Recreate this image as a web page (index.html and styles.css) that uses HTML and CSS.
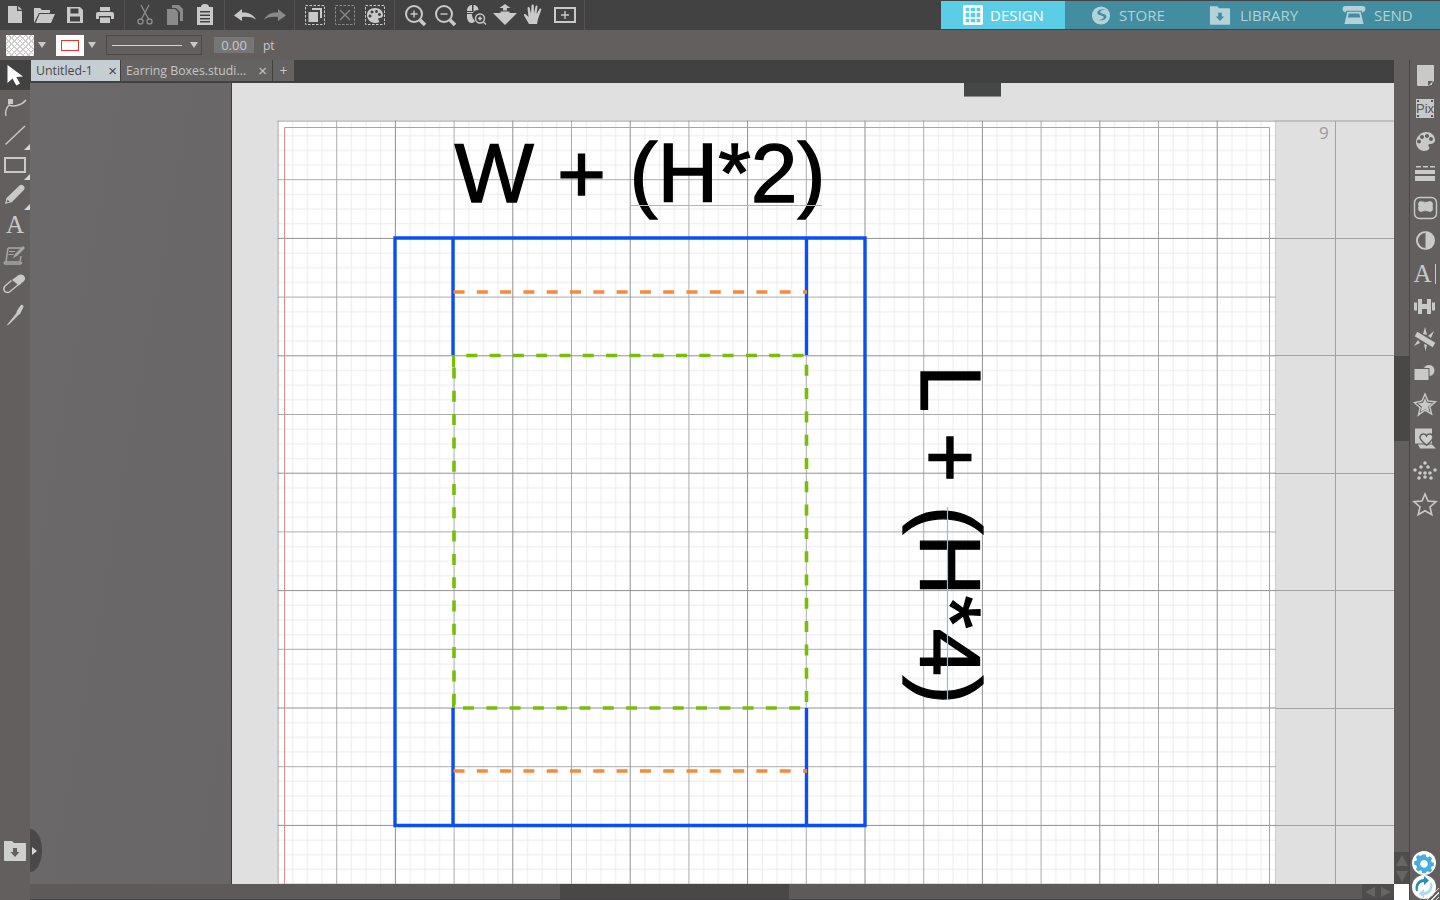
FILE: index.html
```html
<!DOCTYPE html>
<html lang="en">
<head>
<meta charset="utf-8">
<title>Silhouette Studio</title>
<link rel="stylesheet" href="styles.css">
</head>
<body>
<div class="app">
  <header class="topbar">
    <div class="group first">
      <span class="ic"><svg viewBox="0 0 30 30"><path d="M8 6h9v5h5v12H8zM18.300 6l3.700 3.700h-3.700z"/></svg></span>
      <span class="ic"><svg viewBox="0 0 30 30"><path d="M4 23V8h6l2 2h8v3H9zM9.600 14H25l-4 9H5.600z"/></svg></span>
      <span class="ic"><svg viewBox="0 0 30 30"><path fill-rule="evenodd" d="M7 7h13l3 3v13H7zM10.500 8.500v5h8v-5zM10 16.500v5h10v-5z"/></svg></span>
      <span class="ic"><svg viewBox="0 0 30 30"><path d="M10 7h10v4H10zM8 12h14a2 2 0 0 1 2 2v5h-3v-3H9v3H6v-5a2 2 0 0 1 2-2zM10 17.500h10V23H10z"/></svg></span>
    </div>
    <div class="group">
      <span class="ic dim"><svg viewBox="0 0 30 30"><g class="ln"><circle cx="10.500" cy="21.500" r="2.500"/><circle cx="19.500" cy="21.500" r="2.500"/><path d="M11.500 19 19 5M18.500 19 11 5"/></g></svg></span>
      <span class="ic dim"><svg viewBox="0 0 30 30"><path d="M12 5h7l4 4v12h-3v-9l-4-4h-4zM7 9h8l3 3v13H7z"/></svg></span>
      <span class="ic"><svg viewBox="0 0 30 30"><path fill-rule="evenodd" d="M7 7h4a4 3 0 0 1 8 0h4v18H7zM10 11v1.500h10V11zM10 14.500V16h10v-1.500zM10 18v1.500h10V18zM10 21v1.500h10V21z"/></svg></span>
    </div>
    <div class="group">
      <span class="ic"><svg viewBox="0 0 30 30"><path d="M4 15.500l8-6.500v3.500c6-.5 11 1.500 14 7-4-2.500-8-3-14-2.500V21z"/></svg></span>
      <span class="ic dim"><svg viewBox="0 0 30 30"><path d="M26 15.500l-8-6.500v3.500c-6-.5-11 1.500-14 7 4-2.500 8-3 14-2.500V21z"/></svg></span>
    </div>
    <div class="group">
      <span class="ic"><svg viewBox="0 0 30 30"><rect class="dash" x="5.500" y="5.500" width="19" height="19"/><path d="M12 8h10v10h-2v-8h-8z"/><path d="M8.500 12H18v10H8.500z"/></svg></span>
      <span class="ic dim"><svg viewBox="0 0 30 30"><rect class="dash" x="5.500" y="5.500" width="19" height="19"/><path class="ln" d="M10 10l10 10M20 10 10 20"/></svg></span>
      <span class="ic"><svg viewBox="0 0 30 30"><rect class="dash" x="5.500" y="5.500" width="19" height="19"/><path fill-rule="evenodd" d="M15 8c5 0 8 3 8 7 0 3-3 3-4 3s-1 2 0 3-1 2-4 2c-5 0-8-4-8-8s3-7 8-7zM12 10.500a1.500 1.500 0 1 0 .01 0zM16.500 10a1.500 1.500 0 1 0 .01 0zM10 14.500a1.500 1.500 0 1 0 .01 0zM19.500 13a1.500 1.500 0 1 0 .01 0z"/></svg></span>
    </div>
    <div class="group">
      <span class="ic"><svg viewBox="0 0 30 30"><g class="ln thick"><circle cx="14" cy="14" r="8"/><path class="fat" d="M20 20l5 5"/></g><path class="ln" d="M10.500 14h7M14 10.500v7"/></svg></span>
      <span class="ic"><svg viewBox="0 0 30 30"><g class="ln thick"><circle cx="14" cy="14" r="8"/><path class="fat" d="M20 20l5 5"/></g><path class="ln" d="M10.500 14h7"/></svg></span>
      <span class="ic"><svg viewBox="0 0 30 30"><path d="M7 11c0-4 2.500-6 5-6v6zM13.500 5c2.500 0 5 2 5 5-3 0-5 1-5.500 3H7v-1h6.500zM7 14h5c0 3 1 5 3 7-1 1.500-2 2-3.500 2C9 23 7 20 7 17z"/><g class="ln"><circle cx="20" cy="18.500" r="4.500"/><path d="M23.500 22l2.500 2.500M18 18.500h4M20 16.500v4"/></g></svg></span>
      <span class="ic"><svg viewBox="0 0 30 30"><path d="M15 4l5.500 4H17v2.500h-4V8H9.500zM3 13h7.500v-1.500h9V13H27L15 25z"/></svg></span>
      <span class="ic"><svg viewBox="0 0 30 30"><path d="M9 24l-5-8.500c-.5-1.500 1-2 2-1l2.500 2.500L7.500 8c0-1.500 2-1.500 2.200 0l1.300 5.500L11.500 5.500c.2-1.500 2.200-1.500 2.300 0l.2 8 1.500-7c.3-1.500 2.300-1 2 .5L16.500 14l3-5c.8-1.200 2.300-.4 1.800.8L18 19l-1 5z"/></svg></span>
      <span class="ic"><svg viewBox="0 0 30 30"><rect class="ln thick" x="5" y="8" width="20" height="14"/><path class="ln" d="M11 15h8M15 11v8"/></svg></span>
    </div>
    <nav class="modes">
      <a class="mode active"><svg viewBox="0 0 22 22"><path fill-rule="evenodd" d="M2 0h18a2 2 0 0 1 2 2v18a2 2 0 0 1-2 2H2a2 2 0 0 1-2-2V2a2 2 0 0 1 2-2zM3 3v4h4V3zM8.500 3v4h5V3zM15 3v4h4V3zM3 8.500v5h4v-5zM8.500 8.500v5h5v-5zM15 8.500v5h4v-5zM3 15v4h4v-4zM8.500 15v4h5v-4zM15 15v4h4v-4z"/></svg>DESIGN</a>
      <a class="mode store"><svg viewBox="0 0 22 22"><path fill-rule="evenodd" d="M11 1a10 10 0 1 1 0 20 10 10 0 0 1 0-20zM16.500 4.500C12 3.500 7 5 7 8c0 3.500 7 2.500 7 5 0 1.500-3 3-6 3 4 1 9-.5 9-4 0-3-7-2.500-7-4.500 0-1.500 3-3 6.500-3z"/></svg>STORE</a>
      <a class="mode library"><svg viewBox="0 0 24 22"><path fill-rule="evenodd" d="M1 1h8l2 2h11a1 1 0 0 1 1 1v16a1 1 0 0 1-1 1H2a1 1 0 0 1-1-1zM10 8v4H7.500l4.500 5 4.500-5H14V8z"/></svg>LIBRARY</a>
      <a class="mode send"><svg viewBox="0 0 28 22"><path fill-rule="evenodd" d="M5 1h18a3 3 0 0 1 3 3c0 2-1 3-3 4l-1-2H6L5 8C3 7 2 6 2 4a3 3 0 0 1 3-3zM7 7h14l3 13H4zM8.500 9l-1 4h13l-1-4z"/></svg>SEND</a>
    </nav>
  </header>

  <div class="optionsbar">
    <span class="swatch checker"></span>
    <span class="tri"></span>
    <span class="swatch line-swatch"><i></i></span>
    <span class="tri"></span>
    <span class="linestyle"><i></i><span class="tri"></span></span>
    <span class="num">0.00</span>
    <span class="unit">pt</span>
  </div>

  <div class="work">
    <aside class="tools">
      <span class="tool selected"><svg viewBox="0 0 30 30"><path class="white" d="M7.500 5v18l5-4.500 3.800 7 3.700-2-3.700-6.500 6.700-.5z"/></svg></span>
      <span class="tool"><svg viewBox="0 0 30 30"><path class="ln" d="M6 26c-1.500-4 1-9 3-11 4 2 12 1 17-5"/><rect x="8" y="9" width="5" height="5"/></svg></span>
      <span class="tool corner"><svg viewBox="0 0 30 30"><path class="ln" d="M5.500 24.500 25 6"/></svg></span>
      <span class="tool corner"><svg viewBox="0 0 30 30"><rect class="ln thick" x="5" y="8" width="20" height="14"/></svg></span>
      <span class="tool corner"><svg viewBox="0 0 30 30"><path d="M5 24l1.500-6L19 6c1.500-1.500 3-1.500 4.500-.3s1.500 3 .3 4.300L12 22zM7.500 19.500l-.8 3 3-.8z"/></svg></span>
      <span class="tool"><span class="letter">A</span></span>
      <span class="tool dimtool"><svg viewBox="0 0 30 30"><path class="ln" d="M8 8h13v3M8 8l-2 14M21 16l-1 6H5c-1 0-1 2 0 2h15c1 0 1.500-1 1.500-2"/><path d="M13 18l2-4 8-8 2 2-8 8zM9 11h6v1H9zM8.500 14h5v1h-5z"/></svg></span>
      <span class="tool"><svg viewBox="0 0 30 30"><path d="M12 10l6-4.500c2-1.500 4.500-1 6 .5s1.500 3.500 0 5l-5 4.500z"/><path class="ln" d="M11.500 10.500 5 16c-1.500 1.500-1.500 3.500-.5 5s3.500 2 5 1l9-7.500"/></svg></span>
      <span class="tool"><svg viewBox="0 0 30 30"><path d="M18 9l3-4c1-1 3 .5 2.500 2L20 14c-.5 1-3 1-3.500-.5-.3-1.500.7-3 1.500-4.500z"/><path d="M16.500 13l2.500 1.500L9 24.500l-2.500 1z"/></svg></span>
    </aside>

    <div class="center">
      <div class="tabbar">
        <span class="tab current">Untitled-1<b>×</b></span>
        <span class="tab">Earring Boxes.studi...<b>×</b></span>
        <span class="tab plus">+</span>
      </div>
      <div class="body">
        <div class="panel"></div>
        <main class="canvas">
          <svg class="sheet" viewBox="232 83 1162 801">
            <defs>
              <pattern id="grid" patternUnits="userSpaceOnUse" x="277.500" y="120.500" width="117.400" height="117.400">
                <path class="minor" d="M15.180 0V117.400M29.850 0V117.400M44.530 0V117.400M73.880 0V117.400M88.550 0V117.400M103.230 0V117.400M0 15.180H117.400M0 29.850H117.400M0 44.530H117.400M0 73.880H117.400M0 88.550H117.400M0 103.230H117.400"/>
                <path class="medium" d="M59.200 0V117.400M0 59.200H117.400"/>
                <path class="major" d="M.5 0V117.400M0 .5H117.400"/>
              </pattern>
            </defs>
            <rect class="page" x="278" y="121" width="998" height="780"/>
            <rect x="277.500" y="120.500" width="998.500" height="780" fill="url(#grid)"/>
            <path class="outer" d="M1335.500 121V884M1276 121H1394M1276 238.500H1394M1276 355.500H1394M1276 473.500H1394M1276 590.500H1394M1276 708.500H1394M1276 825.500H1394"/>
            <path class="cutline" d="M284.500 890V127.500H1269.500V890"/>
            <text class="nine" x="1319" y="139">9</text>
            <text class="big" x="454.500" y="201.500">W + (H*2)</text>
            <text class="big tall" transform="translate(921 365) rotate(90)">L + (H*4)</text>
            <path class="wavy" d="M630 205.500H822M947.500 507V700"/>
            <path class="blue" d="M395 238H865V825.500H395zM453 238V355M806.500 238V355M453 708V825.500M806.500 708V825.500"/>
            <path class="orange" d="M453.500 292H807M453.500 771H807"/>
            <path class="green" d="M454 355.500H806.500V708H454z"/>
            <path class="green-start" d="M453.500 355V367M453.500 696V708"/>
          </svg>
          <span class="handle"></span>
        </main>
      </div>
      <div class="hscroll">
        <span class="hthumb"></span>
        <span class="harrows"><i class="al"></i><i class="ar"></i></span>
      </div>
    </div>

    <div class="vscroll">
      <span class="vthumb"></span>
      <span class="varrows"><i class="au"></i><i class="ad"></i></span>
      <span class="vcorner"></span>
    </div>

    <aside class="side">
      <span class="sic"><svg viewBox="0 0 30 33"><path fill-rule="evenodd" d="M7 6h17v16l-5 5H8a1 1 0 0 1-1-1zM23 22h-5v5zM22 24l-2 2h2z"/></svg></span>
      <span class="sic"><svg viewBox="0 0 30 33"><rect x="6" y="7" width="18" height="19"/><g class="darkdots"><rect x="7" y="8" width="2" height="2"/><rect x="21" y="8" width="2" height="2"/><rect x="7" y="23" width="2" height="2"/><rect x="21" y="23" width="2" height="2"/></g></svg><em>Pix</em></span>
      <span class="sic"><svg viewBox="0 0 30 33"><path fill-rule="evenodd" d="M16 7c5 0 9 3 9 8 0 3-3 4-5 4s-2 2-1 3 0 4-5 4c-4 0-8-4-8-9s5-10 10-10zM12 10a2 2 0 1 0 .01 0zM17 9a2 2 0 1 0 .01 0zM21 12a2 2 0 1 0 .01 0zM9 14.500a2 2 0 1 0 .01 0z"/></svg></span>
      <span class="sic"><svg viewBox="0 0 30 33"><path d="M6 8h5v1.500H6zM13 8h5v1.500h-5zM20 8h5v1.500h-5zM5 12h20v4H5zM5 18h20v5H5z"/></svg></span>
      <span class="sic"><svg viewBox="0 0 30 33"><rect class="ln" x="4.500" y="6.500" width="22" height="21" rx="5"/><path class="scallop" d="M11 10c2 0 3 1 4.500 1S18 10 20 10s3.500 2 3 4c-.3 1 0 2 0 3 .5 2-1 4-3 4s-3-1-4.500-1-3 1-4.500 1-3.500-2-3-4c.3-1 .3-2 0-3-.5-2 1-4 3-4z"/></svg></span>
      <span class="sic"><svg viewBox="0 0 30 33"><path class="ln thick" d="M15.500 8a8.500 8.500 0 1 0 0 17"/><path d="M15.500 7a9.500 9.500 0 0 1 0 19z"/></svg></span>
      <span class="sic"><span class="letter small">A</span><i class="caret"></i></span>
      <span class="sic"><svg viewBox="0 0 30 33"><path d="M4 12.500h3v8H4zM8 9h4v15H8zM12 14h5v5h-5zM17 9h4v15h-4zM22 12.500h3v8h-3z"/></svg></span>
      <span class="sic"><svg viewBox="0 0 30 33"><path class="fatline" d="M6 11 24 22"/><path d="M13 11l2-7 2 8zM18 13l6-5-3 7zM10 20l-6 3 4-6zM14 21l3 1-1.500 6z"/></svg></span>
      <span class="sic"><svg viewBox="0 0 30 33"><circle class="cutout" cx="19" cy="14.500" r="6"/><rect class="cutout" x="4" y="12.500" width="15" height="12"/></svg></span>
      <span class="sic"><svg viewBox="0 0 30 33"><path class="ln" d="M15 5l3 7 7.500.7-5.700 5 1.800 7.300-6.600-3.800L8.400 26l1.800-7.300-5.700-5L12 12z"/><path d="M15 9l2 4.800 5 .5-3.800 3.400 1.200 5L15 20l-4.400 2.700 1.200-5L8 14.300l5-.5z"/></svg></span>
      <span class="sic"><svg viewBox="0 0 30 33"><path d="M5 6.500h17v15H5zM8 22.500h14l4 4H10z"/><path class="heart" d="M13.500 12c1.500 0 2.500.8 3 1.800.5-1 1.500-1.800 3-1.800 2 0 3.500 1.500 3.500 3.300 0 3-3.500 5.200-6.500 8-3-2.800-6.500-5-6.500-8 0-1.800 1.500-3.300 3.500-3.300z"/></svg></span>
      <span class="sic"><svg viewBox="0 0 30 33"><circle cx="15" cy="8" r="1.800"/><circle cx="11" cy="12" r="1.800"/><circle cx="18" cy="12" r="1.800"/><circle cx="5" cy="15" r="1.800"/><circle cx="25" cy="15" r="1.800"/><circle cx="10" cy="18" r="1.800"/><circle cx="15" cy="18" r="1.800"/><circle cx="20" cy="18" r="1.800"/><circle cx="9" cy="23" r="1.800"/><circle cx="15" cy="22" r="1.800"/><circle cx="21" cy="23" r="1.800"/></svg></span>
      <span class="sic"><svg viewBox="0 0 30 33"><path class="ln star" d="M15 6l3 7 8 .7-6 5.300 1.800 7.700-6.800-4-6.800 4L10 19l-6-5.300 8-.7z"/></svg></span>
      <span class="round gear"><svg viewBox="0 0 24 24"><circle cx="12" cy="12" r="12" fill="#fff"/><path fill="#45aede" fill-rule="evenodd" d="M10 2h4l.6 2.600 1.900.8L18.800 4l2.800 2.800-1.400 2.300.8 1.900 2.600.6v4l-2.600.6-.8 1.900 1.400 2.300-2.800 2.800-2.300-1.400-1.900.8L14 24h-4l-.6-2.600-1.900-.8L5.200 22l-2.800-2.800 1.400-2.300-.8-1.900L.4 14v-4L3 9.400l.8-1.900-1.400-2.300L5.200 2.400l2.300 1.400 1.900-.8zM12 8.500a4.500 4.500 0 1 0 .01 0z" transform="translate(1.800 1.800) scale(.85)"/></svg></span>
      <span class="round sync"><svg viewBox="0 0 24 24"><circle cx="12" cy="12" r="12" fill="#fff"/><path fill="#2f8fa8" d="M4 16C2 10 6 4 12 4V1l5 4.500-5 4.500V7C8 7 5 11 6 16z"/><path fill="#a9dcee" d="M20 8c2 6-2 12-8 12v3l-5-4.500 5-4.500v3c4 0 7-4 6-9z"/></svg></span>
      <span class="stripes"></span>
    </aside>
  </div>

  <div class="drawer"><span class="drawer-folder"><svg viewBox="0 0 24 22"><path fill-rule="evenodd" d="M1 1h8l2 2h11a1 1 0 0 1 1 1v16a1 1 0 0 1-1 1H2a1 1 0 0 1-1-1zM10 8v4H7.500l4.500 5 4.500-5H14V8z"/></svg></span><span class="drawer-tab"><i></i></span></div>
</div>
</body>
</html>
```

FILE: styles.css
```css
* { box-sizing: border-box; }
html, body { margin: 0; height: 100%; overflow: hidden; }
body { font-family: "Open Sans", "Liberation Sans", sans-serif; background: #635f5f; }
svg { display: block; fill: currentColor; }
i { display: block; }

.app { position: relative; width: 1440px; height: 900px; display: flex; flex-direction: column; }

.ln { fill: none; stroke: currentColor; stroke-width: 1.400; }
.ln.thick { stroke-width: 2; }
.ln .fat { stroke-width: 3.500; }
.ln.star { stroke-width: 1.600; }
.dash { fill: none; stroke: currentColor; stroke-width: 1; stroke-dasharray: 2.500 1.500; }

/* top bar */
.topbar { height: 30px; flex: none; display: flex; background: #434242; color: #c9c9c9; }
.group { display: flex; padding: 0 4px 0 5px; border-right: 1px solid #555252; }
.group.first { padding-left: 0; }
.ic { width: 30px; height: 30px; display: block; }
.ic svg { width: 30px; height: 30px; }
.ic.dim { color: #8b8a8a; }

.modes { margin-left: auto; width: 499px; height: 28px; margin-top: 1px; display: flex; background: #428d9f; }
.mode { display: flex; align-items: center; font-size: 15px; color: #b3d2d9; }
.mode svg { height: 21px; flex: none; }
.mode.active { width: 124px; background: #5ccde6; color: #fff; padding-left: 22px; gap: 7px; }
.mode.active svg { width: 20px; height: 20px; }
.mode.store { width: 124px; padding-left: 26px; gap: 8px; }
.mode.store svg { width: 20px; }
.mode.library { width: 130px; padding-left: 20px; gap: 9px; }
.mode.library svg { width: 22px; }
.mode.send { flex: 1; padding-left: 21px; gap: 6px; }
.mode.send svg { width: 28px; }

/* options bar */
.optionsbar { height: 30px; flex: none; display: flex; align-items: center; background: #635f5f; padding-left: 6px; color: #c9c9c9; font-size: 12px; }
.swatch { width: 28px; height: 21px; display: block; background: #fff; }
.checker { background-color: #fff; background-image: repeating-linear-gradient(45deg, #cfcfcf 0 1px, transparent 1px 4px), repeating-linear-gradient(-45deg, #cfcfcf 0 1px, transparent 1px 4px); }
.tri { display: block; width: 0; height: 0; border-left: 4px solid transparent; border-right: 4px solid transparent; border-top: 6px solid #c9c9c9; margin: 0 4px 0 4px; }
.line-swatch { margin-left: 6px; display: flex; align-items: center; justify-content: center; }
.line-swatch i { width: 18px; height: 11px; border: 1px solid #e3352b; }
.linestyle { margin-left: 6px; width: 96px; height: 20px; border: 1px solid #4c4949; display: flex; align-items: center; padding-left: 5px; justify-content: space-between; }
.linestyle i { width: 70px; height: 1px; background: #d6d6d6; }
.linestyle .tri { margin-right: 3px; }
.num { margin-left: 12px; width: 40px; height: 16px; background: #777575; color: #c9c9c9; font-size: 13px; line-height: 17px; text-align: center; }
.unit { margin-left: 9px; font-size: 12px; }

/* work area */
.work { flex: 1; min-height: 0; display: flex; }
.tools { width: 30px; flex: none; color: #c9c9c9; background: #635f5f; }
.tool { position: relative; display: block; width: 30px; height: 30px; }
.tool svg { width: 30px; height: 30px; }
.tool.selected { background: #434242; }
.tool.dimtool { color: #a8a8a8; }
.white { fill: #fff; }
.tool.corner::after { content: ""; position: absolute; right: 0; bottom: 0; border-left: 6px solid transparent; border-bottom: 6px solid #d6d6d6; }
.letter { display: block; text-align: center; font: 25px/30px "Liberation Serif", serif; color: #c9c9c9; }

.center { flex: none; width: 1364px; display: flex; flex-direction: column; }
.tabbar { height: 23px; flex: none; display: flex; gap: 1px; background: #414141; padding: 0 0 2px 1px; }
.tab { width: 151px; height: 21px; display: flex; align-items: center; justify-content: space-between; padding: 0 5px 0 5px; background: #656262; color: #c6c6c6; font-size: 12.300px; white-space: nowrap; }
.tab.current { width: 89px; background: #c5ced2; color: #484848; padding-right: 3px; }
.tab b { font-family: "Liberation Sans", sans-serif; font-weight: 400; font-size: 15px; }
.tab.plus { width: 21px; padding: 0; justify-content: center; font-size: 14px; }

.body { flex: 1; min-height: 0; display: flex; }
.panel { width: 202px; flex: none; background: linear-gradient(100deg, #6b6969, #686666); border-right: 1px solid #3e3d3d; }
.canvas { position: relative; flex: 1; background: #e0e0e0; overflow: hidden; }
.sheet { width: 1162px; height: 801px; }
.handle { position: absolute; left: 732px; top: 0; width: 37px; height: 14px; background: #454646; border-bottom: 1px solid #8a8a8a; }

.page { fill: #fff; }
.minor { fill: none; stroke: #ebebeb; stroke-width: 1; }
.medium { fill: none; stroke: #ababab; stroke-width: 1; }
.major { fill: none; stroke: #909090; stroke-width: 1; }
.outer { fill: none; stroke: #a2a2a2; stroke-width: 1; }
.cutline { fill: none; stroke: #e58a8a; stroke-width: 1; }
.nine { font-family: "Open Sans", sans-serif; font-size: 17px; fill: #9b9b9b; }
.big { font-family: "Liberation Sans", Arial, sans-serif; font-size: 84px; fill: #000; stroke: #000; stroke-width: 1.300; }
.big.tall { font-size: 85px; }
.wavy { fill: none; stroke: #7cc8e4; stroke-width: 1.200; }
.blue { fill: none; stroke: #0b4ff2; stroke-width: 3.400; }
.orange { fill: none; stroke: #f58a3c; stroke-width: 3.400; stroke-dasharray: 11 12.300; }
.green { fill: none; stroke: #79bd08; stroke-width: 3.600; stroke-dasharray: 11 12.300; stroke-dashoffset: 11; }
.green-start { fill: none; stroke: #79bd08; stroke-width: 3; }

.hscroll { height: 16px; flex: none; display: flex; background: #5e5a5a; border-bottom: 1px solid #474545; padding-left: 530px; }
.hthumb { width: 229px; background: #4a4747; }
.harrows { margin-left: auto; width: 32px; display: flex; align-items: center; justify-content: space-around; background: #4f4c4c; }
.al, .ar, .au, .ad { width: 0; height: 0; }
.al { border: 5px solid transparent; border-left: 0; border-right: 10px solid #676464; }
.ar { border: 5px solid transparent; border-right: 0; border-left: 10px solid #676464; }
.au { border: 6px solid transparent; border-top: 0; border-bottom: 11px solid #676464; }
.ad { border: 6px solid transparent; border-bottom: 0; border-top: 11px solid #676464; }

.vscroll { width: 16px; flex: none; display: flex; flex-direction: column; background: #635f5f; }
.vthumb { display: block; margin-top: 296px; height: 85px; background: #4a4747; }
.varrows { margin-top: auto; height: 32px; display: flex; flex-direction: column; align-items: center; justify-content: space-around; background: #4f4c4c; }
.vcorner { display: block; height: 16px; background: #fff; }

/* right panel */
.side { position: relative; width: 30px; flex: none; border-left: 1px solid #474545; color: #c9c9c9; background: #635f5f; margin-left: -1px; }
.sic { position: relative; display: block; width: 29px; height: 33px; }
.sic svg { width: 30px; height: 33px; }
.side .sic:first-child { margin-top: -1px; }
.sic em { position: absolute; left: 0; right: -1px; top: 8px; text-align: center; font: normal 13px/17px "Liberation Sans", sans-serif; color: #555; }
.darkdots { fill: #555; }
.scallop { fill: currentColor; stroke: #777; stroke-width: .8; stroke-dasharray: 2 1; }
.fatline { fill: none; stroke: currentColor; stroke-width: 5; }
.cutout { stroke: #635f5f; stroke-width: 1; }
.heart { fill: #cfcfcf; stroke: #635f5f; stroke-width: 1.500; }
.letter.small { font-size: 25px; line-height: 33px; padding-right: 4px; }
.caret { position: absolute; right: 3px; top: 7px; width: 1px; height: 20px; background: #c9c9c9; }
.round { position: absolute; left: 2px; width: 24px; height: 24px; }
.round svg { width: 24px; height: 24px; }
.gear { top: 791px; }
.sync { top: 815px; }
.stripes { position: absolute; right: 0; bottom: 0; width: 14px; height: 14px; background: repeating-linear-gradient(135deg, transparent 0 2px, #e4e4e4 2px 3px); clip-path: polygon(100% 0, 100% 100%, 0 100%); }

/* drawer */
.drawer { position: absolute; left: 3px; top: 829px; display: flex; align-items: center; height: 43px; }
.drawer-folder { display: block; width: 24px; color: #cfcfcf; }
.drawer-folder svg { width: 24px; height: 22px; }
.drawer-tab { position: absolute; left: 27px; top: 0; width: 12px; height: 43px; background: #4a4848; border-radius: 0 12px 12px 0 / 0 22px 22px 0; display: flex; align-items: center; padding-left: 2px; }
.drawer-tab i { border: 4px solid transparent; border-right: 0; border-left: 5px solid #d8d8d8; }
```
